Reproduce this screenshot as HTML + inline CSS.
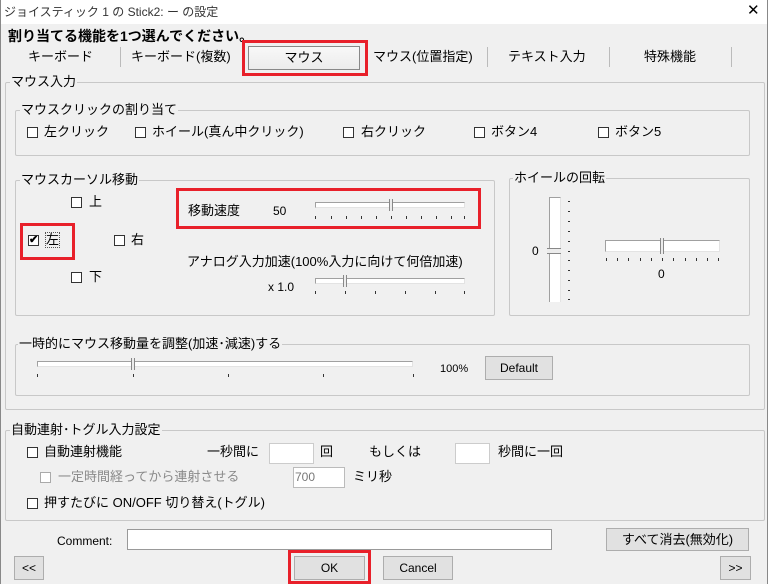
<!DOCTYPE html>
<html><head><meta charset="utf-8"><style>
*{margin:0;padding:0;box-sizing:border-box}
body{width:768px;height:584px;background:#f0f0f0;position:relative;overflow:hidden;font-family:"Liberation Sans","Noto Sans CJK JP",sans-serif;font-size:12px;color:#000}
.a{position:absolute;white-space:nowrap;line-height:14px}
.g{position:absolute;border:1px solid #c8c8c8;border-radius:2px}
.gl{position:absolute;background:#f0f0f0;padding:0 1px;line-height:14px;white-space:nowrap}
.cb{position:absolute;width:11px;height:11px;border:1px solid #333;background:#fff}
.red{position:absolute;border:3px solid #e8202a}
.btn{position:absolute;background:#e1e1e1;border:1px solid #adadad;text-align:center;line-height:22px}
.inp{position:absolute;background:#fff;border:1px solid #7a7a7a}
.tr{position:absolute;height:6px;background:#fff;border-top:1px solid #a0a0a0;border-left:1px solid #a0a0a0;border-bottom:1px solid #e3e3e3;border-right:1px solid #e3e3e3}
.th{position:absolute;width:4px;height:12px;border-left:1px solid #888;border-right:1px solid #888;background:#ececec}
.tk{position:absolute;width:1px;height:3px;background:#333}
.sep{position:absolute;width:1px;height:20px;background:#bbb}
.dis{color:#8a8a8a}
</style></head><body>
<div style="position:absolute;left:0;top:0;width:768px;height:24px;background:#fff"></div>
<div style="position:absolute;left:0;top:0;width:1px;height:584px;background:#888"></div>
<div style="position:absolute;right:0;top:0;width:1px;height:584px;background:#888"></div>
<div class="a" style="left:4px;top:5px;font-size:12px;color:#333">ジョイスティック 1 の Stick2: ー の設定</div>
<div class="a" style="left:747px;top:4px;font-size:15px">✕</div>
<div class="a" style="left:8px;top:27px;font-size:14px;font-weight:bold;line-height:18px">割り当てる機能を1つ選んでください。</div>
<div class="a" style="left:28px;top:50px;font-size:13px">キーボード</div>
<div class="sep" style="left:120px;top:47px"></div>
<div class="a" style="left:131px;top:50px;font-size:13px">キーボード(複数)</div>
<div style="position:absolute;left:248px;top:46px;width:112px;height:24px;border:1px solid #888;background:linear-gradient(#f8f8f8,#ececec);text-align:center;line-height:22px;font-size:13px">マウス</div>
<div class="red" style="left:242px;top:40px;width:126px;height:36px"></div>
<div class="a" style="left:373px;top:50px;font-size:13px">マウス(位置指定)</div>
<div class="sep" style="left:487px;top:47px"></div>
<div class="a" style="left:508px;top:50px;font-size:13px">テキスト入力</div>
<div class="sep" style="left:609px;top:47px"></div>
<div class="a" style="left:644px;top:50px;font-size:13px">特殊機能</div>
<div class="sep" style="left:731px;top:47px"></div>

<div class="g" style="left:5px;top:82px;width:760px;height:328px"></div>
<div class="gl" style="left:10px;top:75px;font-size:13px">マウス入力</div>

<div class="g" style="left:15px;top:110px;width:735px;height:46px"></div>
<div class="gl" style="left:20px;top:103px;font-size:13px">マウスクリックの割り当て</div>
<div class="cb" style="left:27px;top:127px"></div><div class="a" style="left:44px;top:125px;font-size:13px">左クリック</div>
<div class="cb" style="left:135px;top:127px"></div><div class="a" style="left:152px;top:125px;font-size:13px">ホイール(真ん中クリック)</div>
<div class="cb" style="left:343px;top:127px"></div><div class="a" style="left:361px;top:125px;font-size:13px">右クリック</div>
<div class="cb" style="left:474px;top:127px"></div><div class="a" style="left:491px;top:125px;font-size:13px">ボタン4</div>
<div class="cb" style="left:598px;top:127px"></div><div class="a" style="left:615px;top:125px;font-size:13px">ボタン5</div>

<div class="g" style="left:15px;top:180px;width:480px;height:136px"></div>
<div class="gl" style="left:20px;top:173px;font-size:13px">マウスカーソル移動</div>
<div class="cb" style="left:71px;top:197px"></div><div class="a" style="left:89px;top:195px;font-size:13px">上</div>
<div class="cb" style="left:28px;top:235px"><span style="position:absolute;left:0;top:-3px;font-size:11px;font-weight:bold">✔</span></div>
<div class="a" style="left:46px;top:233px;font-size:13px;outline:1px dotted #555">左</div>
<div class="red" style="left:20px;top:223px;width:55px;height:37px"></div>
<div class="cb" style="left:114px;top:235px"></div><div class="a" style="left:131px;top:233px;font-size:13px">右</div>
<div class="cb" style="left:71px;top:272px"></div><div class="a" style="left:89px;top:270px;font-size:13px">下</div>

<div class="red" style="left:176px;top:188px;width:305px;height:41px"></div>
<div class="a" style="left:188px;top:204px;font-size:13px">移動速度</div>
<div class="a" style="left:273px;top:204px;font-size:12px">50</div>
<div class="tr" style="left:315px;top:202px;width:150px"></div>
<div class="th" style="left:389px;top:199px"></div>
<div class="a" style="left:187px;top:255px;font-size:13px">アナログ入力加速(100%入力に向けて何倍加速)</div>
<div class="a" style="left:268px;top:280px;font-size:12px">x 1.0</div>
<div class="tr" style="left:315px;top:278px;width:150px"></div>
<div class="th" style="left:343px;top:275px"></div>

<div class="g" style="left:509px;top:178px;width:241px;height:138px"></div>
<div class="gl" style="left:513px;top:171px;font-size:13px">ホイールの回転</div>
<div style="position:absolute;left:549px;top:197px;width:12px;height:105px;background:#fff;border-left:1px solid #a0a0a0;border-top:1px solid #a0a0a0;border-right:1px solid #e3e3e3"></div>
<div style="position:absolute;left:547px;top:248px;width:14px;height:6px;background:#ececec;border-top:1px solid #888;border-bottom:1px solid #888"></div>
<div class="a" style="left:532px;top:244px">0</div>
<div class="tr" style="left:605px;top:240px;width:115px;height:12px"></div>
<div class="th" style="left:660px;top:238px;height:16px"></div>
<div class="a" style="left:658px;top:267px">0</div>

<div class="g" style="left:15px;top:344px;width:735px;height:52px"></div>
<div class="gl" style="left:18px;top:337px;font-size:13px">一時的にマウス移動量を調整(加速･減速)する</div>
<div class="tr" style="left:37px;top:361px;width:376px"></div>
<div class="th" style="left:131px;top:358px"></div>
<div class="a" style="left:440px;top:362px;font-size:11px">100%</div>
<div class="btn" style="left:485px;top:356px;width:68px;height:24px;font-size:12px">Default</div>

<div class="g" style="left:5px;top:430px;width:760px;height:91px"></div>
<div class="gl" style="left:10px;top:423px;font-size:13px">自動連射･トグル入力設定</div>
<div class="cb" style="left:27px;top:447px"></div><div class="a" style="left:44px;top:445px;font-size:13px">自動連射機能</div>
<div class="a" style="left:207px;top:445px;font-size:13px">一秒間に</div>
<div class="inp" style="left:269px;top:443px;width:45px;height:21px;border-color:#ccc"></div>
<div class="a" style="left:320px;top:445px;font-size:13px">回</div>
<div class="a" style="left:369px;top:445px;font-size:13px">もしくは</div>
<div class="inp" style="left:455px;top:443px;width:35px;height:21px;border-color:#ccc"></div>
<div class="a" style="left:498px;top:445px;font-size:13px">秒間に一回</div>
<div class="cb" style="left:40px;top:472px;border-color:#aaa"></div><div class="a dis" style="left:58px;top:470px;font-size:13px">一定時間経ってから連射させる</div>
<div class="inp" style="left:293px;top:467px;width:52px;height:21px;border-color:#bbb;color:#777;padding-left:1px;line-height:19px">700</div>
<div class="a" style="left:353px;top:470px;font-size:13px">ミリ秒</div>
<div class="cb" style="left:27px;top:498px"></div><div class="a" style="left:44px;top:496px;font-size:13px">押すたびに ON/OFF 切り替え(トグル)</div>

<div class="a" style="left:57px;top:534px;font-size:12px">Comment:</div>
<div class="inp" style="left:127px;top:529px;width:425px;height:21px;border-color:#999"></div>
<div class="btn" style="left:606px;top:528px;width:143px;height:23px;font-size:13px;line-height:21px">すべて消去(無効化)</div>

<div class="btn" style="left:14px;top:556px;width:30px;height:24px">&lt;&lt;</div>
<div class="btn" style="left:294px;top:556px;width:71px;height:24px">OK</div>
<div class="red" style="left:288px;top:550px;width:83px;height:34px"></div>
<div class="btn" style="left:383px;top:556px;width:70px;height:24px">Cancel</div>
<div class="btn" style="left:720px;top:556px;width:31px;height:24px">&gt;&gt;</div>

<svg style="position:absolute;left:0;top:0" width="768" height="584">
<g fill="#333">
<rect x="315" y="216" width="1" height="3"/><rect x="331" y="216" width="1" height="3"/><rect x="346" y="216" width="1" height="3"/><rect x="361" y="216" width="1" height="3"/><rect x="376" y="216" width="1" height="3"/><rect x="391" y="216" width="1" height="3"/><rect x="406" y="216" width="1" height="3"/><rect x="421" y="216" width="1" height="3"/><rect x="436" y="216" width="1" height="3"/><rect x="451" y="216" width="1" height="3"/><rect x="464" y="216" width="1" height="3"/>
<rect x="315" y="291" width="1" height="3"/><rect x="345" y="291" width="1" height="3"/><rect x="375" y="291" width="1" height="3"/><rect x="405" y="291" width="1" height="3"/><rect x="435" y="291" width="1" height="3"/><rect x="464" y="291" width="1" height="3"/>
<rect x="37" y="374" width="1" height="3"/><rect x="133" y="374" width="1" height="3"/><rect x="228" y="374" width="1" height="3"/><rect x="323" y="374" width="1" height="3"/><rect x="413" y="374" width="1" height="3"/>
<rect x="606" y="258" width="1" height="3"/><rect x="617" y="258" width="1" height="3"/><rect x="628" y="258" width="1" height="3"/><rect x="640" y="258" width="1" height="3"/><rect x="651" y="258" width="1" height="3"/><rect x="662" y="258" width="1" height="3"/><rect x="673" y="258" width="1" height="3"/><rect x="685" y="258" width="1" height="3"/><rect x="696" y="258" width="1" height="3"/><rect x="707" y="258" width="1" height="3"/><rect x="718" y="258" width="1" height="3"/>
<rect x="568" y="201" width="2" height="1"/><rect x="568" y="211" width="2" height="1"/><rect x="568" y="221" width="2" height="1"/><rect x="568" y="231" width="2" height="1"/><rect x="568" y="241" width="2" height="1"/><rect x="568" y="251" width="2" height="1"/><rect x="568" y="260" width="2" height="1"/><rect x="568" y="270" width="2" height="1"/><rect x="568" y="280" width="2" height="1"/><rect x="568" y="290" width="2" height="1"/><rect x="568" y="299" width="2" height="1"/>
</g></svg>
</body></html>
